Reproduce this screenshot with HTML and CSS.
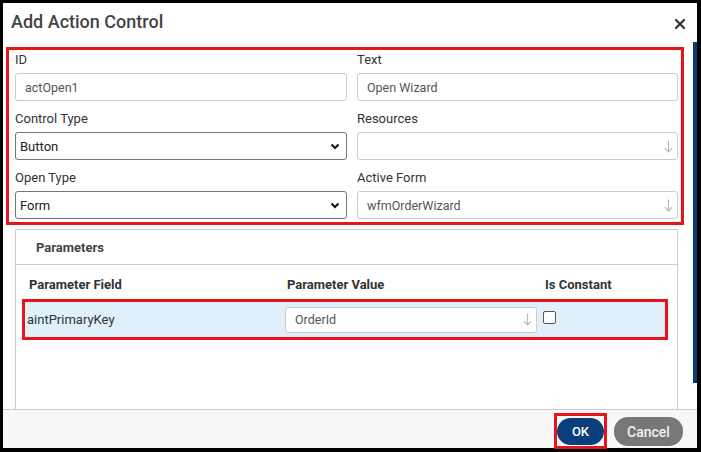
FILE: index.html
```html
<!DOCTYPE html>
<html lang="en">
<head>
  <meta charset="UTF-8" />
  <title>Add Action Control</title>
  <link rel="stylesheet" href="styles.css">
</head>
<body>
  <div class="dialog" role="dialog" aria-label="Add Action Control">
    <div class="dialog-head">
      <h2 class="dialog-title">Add Action Control</h2>
      <button type="button" class="close" aria-label="Close">
        <svg width="10" height="10" viewBox="0 0 10 10"><path d="M1 1L9 9M9 1L1 9" stroke="#333" stroke-width="2.2" stroke-linecap="square"/></svg>
      </button>
    </div>

    <div class="dialog-body">
      <div class="content">
        <div class="form-grid mark">
          <div class="field">
            <label>ID</label>
            <div class="input">actOpen1</div>
          </div>
          <div class="field">
            <label>Text</label>
            <div class="input">Open Wizard</div>
          </div>
          <div class="field">
            <label>Control Type</label>
            <div class="select">Button
              <svg width="10" height="7" viewBox="0 0 10 7"><path d="M1.5 1.5L5 5L8.5 1.5" fill="none" stroke="#111" stroke-width="2"/></svg>
            </div>
          </div>
          <div class="field">
            <label>Resources</label>
            <div class="input lookup">
              <span></span>
              <svg width="9" height="13" viewBox="0 0 9 13"><path d="M4.5 0.5V12M0.8 8.2L4.5 12L8.2 8.2" fill="none" stroke="#bbb" stroke-width="1.2"/></svg>
            </div>
          </div>
          <div class="field">
            <label>Open Type</label>
            <div class="select">Form
              <svg width="10" height="7" viewBox="0 0 10 7"><path d="M1.5 1.5L5 5L8.5 1.5" fill="none" stroke="#111" stroke-width="2"/></svg>
            </div>
          </div>
          <div class="field">
            <label>Active Form</label>
            <div class="input lookup">
              <span>wfmOrderWizard</span>
              <svg width="9" height="13" viewBox="0 0 9 13"><path d="M4.5 0.5V12M0.8 8.2L4.5 12L8.2 8.2" fill="none" stroke="#bbb" stroke-width="1.2"/></svg>
            </div>
          </div>
        </div>

        <div class="panel">
          <div class="panel-head">Parameters</div>
          <div class="param-cols">
            <span>Parameter Field</span>
            <span>Parameter Value</span>
            <span>Is Constant</span>
          </div>
          <div class="param-row mark">
            <span class="param-name">aintPrimaryKey</span>
            <div class="input lookup small">
              <span>OrderId</span>
              <svg width="9" height="13" viewBox="0 0 9 13"><path d="M4.5 0.5V12M0.8 8.2L4.5 12L8.2 8.2" fill="none" stroke="#bbb" stroke-width="1.2"/></svg>
            </div>
            <span class="checkbox"></span>
          </div>
        </div>
      </div>
      <div class="scroll-thumb"></div>
    </div>

    <div class="dialog-foot">
      <span class="ok-wrap mark"><button type="button" class="btn btn-ok">OK</button></span>
      <button type="button" class="btn btn-cancel">Cancel</button>
    </div>
  </div>
</body>
</html>
```

FILE: styles.css
```css
html, body {
  margin: 0;
  background: #000;
}
body {
  padding: 3px 4px 4px 3px;
  font-family: Roboto, "Liberation Sans", Arial, sans-serif;
  color: #333;
}

.dialog {
  width: 694px;
  height: 445px;
  background: #fff;
  display: flex;
  flex-direction: column;
}

/* header */
.dialog-head {
  height: 39px;
  display: flex;
  align-items: flex-start;
  justify-content: space-between;
  padding: 0 12px 0 8px;
  box-sizing: border-box;
}
.dialog-title {
  margin: 7px 0 0 0;
  font-size: 18px;
  line-height: 24px;
  font-weight: 500;
  color: #444;
}
.close {
  margin-top: 16px;
  padding: 0;
  border: none;
  background: none;
  width: 10px;
  height: 10px;
  display: flex;
}

/* body */
.dialog-body {
  flex: 1;
  display: flex;
  min-height: 0;
}
.content {
  width: 690px;
  display: flex;
  flex-direction: column;
  padding-top: 5px;
  box-sizing: border-box;
}
.scroll-thumb {
  width: 4px;
  height: 341px;
  background: #0d3a6c;
}

.mark {
  border: 3px solid #e8141c;
}

.form-grid {
  margin-left: 3px;
  width: 678px;
  box-sizing: border-box;
  display: grid;
  grid-template-columns: 332px 321px;
  column-gap: 10px;
  row-gap: 10px;
  padding: 2px 3px 3px 6px;
}
.field label {
  display: block;
  font-size: 13px;
  line-height: 16px;
  margin-bottom: 5px;
  color: #333;
}
.input, .select {
  height: 28px;
  box-sizing: border-box;
  border: 1px solid #ccc;
  border-radius: 3px;
  display: flex;
  align-items: center;
  justify-content: space-between;
  font-size: 12.5px;
  color: #555;
  padding: 0 8px 0 9px;
}
.select {
  border-color: #767676;
  color: #222;
  font-size: 13px;
  padding: 0 6px 0 4px;
}
.lookup {
  padding-right: 4px;
}
.input.small {
  height: 26px;
  padding-left: 9px;
  background: #fff;
}

/* parameters panel */
.panel {
  flex: 1;
  margin: 4px 0 0 12px;
  width: 663px;
  box-sizing: border-box;
  border: 1px solid #ccc;
  border-bottom: none;
}
.panel-head {
  height: 35px;
  box-sizing: border-box;
  border-bottom: 1px solid #ccc;
  padding: 10px 0 0 20px;
  font-size: 13px;
  line-height: 16px;
  font-weight: bold;
  color: #444;
}
.param-cols {
  display: grid;
  grid-template-columns: 258px 258px 1fr;
  padding: 12px 0 6px 13px;
  font-size: 13px;
  line-height: 16px;
  font-weight: bold;
  color: #333;
}
.param-row {
  margin-left: 6px;
  width: 646px;
  height: 41px;
  box-sizing: border-box;
  background: #dff0fb;
  display: grid;
  grid-template-columns: 252px 252px 1fr;
  column-gap: 6px;
  align-items: center;
  padding-left: 2px;
}
.param-name {
  font-size: 13px;
  line-height: 16px;
  color: #333;
}
.checkbox {
  align-self: start;
  margin-top: 9px;
  width: 13px;
  height: 13px;
  box-sizing: border-box;
  border: 1px solid #555;
  border-radius: 2px;
  background: #fff;
}

/* footer */
.dialog-foot {
  height: 39px;
  box-sizing: border-box;
  border-top: 1px solid #ccc;
  background: #f8f8f8;
  display: flex;
  justify-content: flex-end;
  align-items: flex-start;
  padding: 3px 14px 0 0;
  gap: 7px;
}
.ok-wrap {
  display: flex;
  padding: 2px 0 1px 0;
}
.btn {
  border: none;
  border-radius: 14px;
  font-family: Roboto, "Liberation Sans", Arial, sans-serif;
  font-weight: 500;
  color: #fff;
  padding: 0;
}
.btn-ok {
  width: 47px;
  height: 27px;
  background: #0b3f7b;
  font-size: 13px;
}
.btn-cancel {
  margin-top: 4px;
  width: 69px;
  height: 29px;
  background: #777;
  font-size: 14px;
  color: #f2f2f2;
}
```
